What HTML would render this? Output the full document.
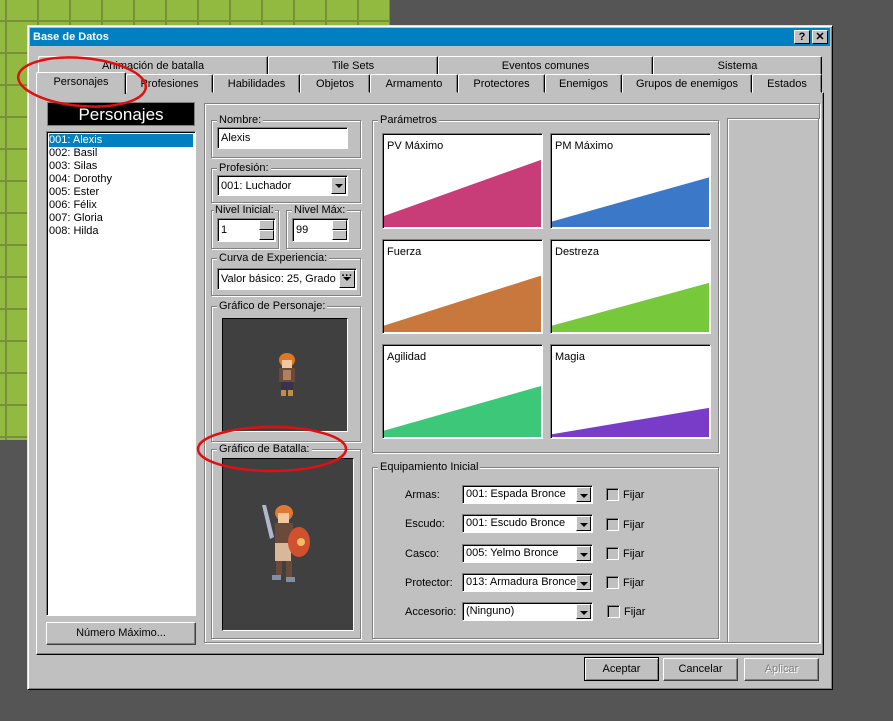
<!DOCTYPE html>
<html><head><meta charset="utf-8"><style>
*{box-sizing:border-box;margin:0;padding:0}
body{width:893px;height:721px;background:#555;position:relative;overflow:hidden;font-family:"Liberation Sans",sans-serif;font-size:11px;color:#000}
.a{position:absolute;white-space:nowrap}
.grass{background-color:#93ba40;background-image:linear-gradient(90deg,transparent 5px,#78903a 5px,#78903a 7px,transparent 7px),linear-gradient(0deg,transparent 10px,#78903a 10px,#78903a 12px,transparent 12px);background-size:32px 32px}
.win{left:27px;top:25px;width:806px;height:665px;background:#c0c0c0;border:1px solid;border-color:#dfdfdf #000 #000 #dfdfdf;box-shadow:inset 1px 1px #fff,inset -1px -1px #808080}
.title{left:30px;top:28px;width:800px;height:18px;background:#0080c0;color:#fff;font-weight:bold;font-size:11px;line-height:18px;padding-left:3px}
.tb{width:16px;height:14px;background:#c0c0c0;border:1px solid;border-color:#fff #000 #000 #fff;color:#000;font-weight:bold;text-align:center;line-height:12px;font-size:11px}
.tab{height:19px;border:1px solid;border-color:#fff #000 transparent #fff;border-radius:2px 2px 0 0;text-align:center;line-height:19px;background:#c0c0c0;box-shadow:inset -1px 0 #808080}
.raised{border:1px solid;border-color:#fff #404040 #404040 #fff;box-shadow:inset -1px -1px #808080}
.sunk{border:1px solid;border-color:#808080 #fff #fff #808080;box-shadow:inset 1px 1px #000}
.grp{border:1px solid #808080;box-shadow:inset 1px 1px #fff,1px 1px #fff}
.lg{position:absolute;top:-7px;left:5px;background:#c0c0c0;padding:0 2px;line-height:13px;white-space:nowrap}
.inp{background:#fff;line-height:18px;padding-left:3px;white-space:nowrap;overflow:hidden}
.dd{position:absolute;right:1px;top:1px;bottom:1px;width:15px;background:#c0c0c0;border:1px solid;border-color:#fff #000 #000 #fff}
.dd:after{content:"";position:absolute;left:3px;top:6px;border:4px solid transparent;border-top:4px solid #000;border-bottom:0}
.spin{position:absolute;right:1px;top:1px;width:15px;bottom:1px}
.spin div{height:50%;background:#c0c0c0;border:1px solid;border-color:#fff #000 #000 #fff}
.chart{background:#fff}
.chart span{position:absolute;left:4px;top:6px}
.btn{text-align:center;line-height:21px;background:#c0c0c0}
.cb{width:13px;height:13px;background:#c0c0c0;border:1px solid;border-color:#808080 #fff #fff #808080;box-shadow:inset 1px 1px #000}
</style></head><body>
<div class="a grass" style="left:0;top:0;width:390px;height:25px"></div>
<div class="a grass" style="left:0;top:0;width:28px;height:440px"></div>
<div class="a win"></div>
<div class="a title">Base de Datos
 <div class="a tb" style="left:764px;top:2px">?</div><div class="a tb" style="left:782px;top:2px">✕</div></div>

<div class="a tab" style="left:38px;top:56px;width:230px">Animación de batalla</div>
<div class="a tab" style="left:268px;top:56px;width:170px">Tile Sets</div>
<div class="a tab" style="left:438px;top:56px;width:215px">Eventos comunes</div>
<div class="a tab" style="left:653px;top:56px;width:169px">Sistema</div>

<div class="a raised" style="left:36px;top:92px;width:788px;height:563px;border-color:#fff #000 #000 #fff"></div>
<div class="a tab" style="left:126px;top:74px;width:87px">Profesiones</div>
<div class="a tab" style="left:213px;top:74px;width:87px">Habilidades</div>
<div class="a tab" style="left:300px;top:74px;width:70px">Objetos</div>
<div class="a tab" style="left:370px;top:74px;width:88px">Armamento</div>
<div class="a tab" style="left:458px;top:74px;width:87px">Protectores</div>
<div class="a tab" style="left:545px;top:74px;width:77px">Enemigos</div>
<div class="a tab" style="left:622px;top:74px;width:130px">Grupos de enemigos</div>
<div class="a tab" style="left:752px;top:74px;width:70px">Estados</div>
<div class="a tab" style="left:36px;top:72px;width:90px;height:22px;border-bottom:none;line-height:18px">Personajes</div>

<div class="a" style="left:47px;top:102px;width:148px;height:24px;background:#000;color:#fff;font-size:17px;text-align:center;line-height:24px;border:1px solid #808080">Personajes</div>
<div class="a sunk" style="left:46px;top:131px;width:150px;height:485px;background:#fff;padding:2px 2px;line-height:13px">
<div style="background:#0080c0;color:#fff">001: Alexis</div><div>002: Basil</div><div>003: Silas</div><div>004: Dorothy</div><div>005: Ester</div><div>006: Félix</div><div>007: Gloria</div><div>008: Hilda</div></div>
<div class="a raised btn" style="left:46px;top:622px;width:150px;height:23px">Número Máximo...</div>

<div class="a grp" style="left:204px;top:103px;width:616px;height:540px"></div>

<div class="a grp" style="left:211px;top:120px;width:150px;height:38px"><span class="lg">Nombre:</span></div>
<div class="a sunk inp" style="left:217px;top:127px;width:131px;height:22px;line-height:20px">Alexis</div>
<div class="a grp" style="left:211px;top:168px;width:150px;height:35px"><span class="lg">Profesión:</span></div>
<div class="a sunk inp" style="left:217px;top:175px;width:131px;height:21px;line-height:20px">001: Luchador<div class="dd"></div></div>
<div class="a grp" style="left:211px;top:210px;width:68px;height:39px"><span class="lg" style="left:2px;padding:0 1px">Nivel Inicial:</span></div>
<div class="a sunk inp" style="left:217px;top:218px;width:59px;height:24px;line-height:22px">1<div class="spin"><div></div><div></div></div></div>
<div class="a grp" style="left:286px;top:210px;width:75px;height:39px"><span class="lg">Nivel Máx:</span></div>
<div class="a sunk inp" style="left:292px;top:218px;width:57px;height:24px;line-height:22px">99<div class="spin"><div></div><div></div></div></div>
<div class="a grp" style="left:211px;top:258px;width:150px;height:38px"><span class="lg">Curva de Experiencia:</span></div>
<div class="a sunk inp" style="left:217px;top:268px;width:140px;height:22px;line-height:21px">Valor básico: 25, Grado<div class="dd" style="width:16px;text-align:center;line-height:10px;font-weight:bold">···</div></div>
<div class="a grp" style="left:211px;top:306px;width:150px;height:136px"><span class="lg">Gráfico de Personaje:</span></div>
<div class="a" style="left:222px;top:318px;width:126px;height:114px;background:#404040;border:1px solid;border-color:#000 #fff #fff #000"></div>
<svg class="a" style="left:275px;top:352px" width="24" height="46" viewBox="0 0 24 46">
<ellipse cx="12" cy="8" rx="8" ry="7" fill="#e07820"/><rect x="7" y="8" width="10" height="8" fill="#f0c8a0"/><rect x="4" y="16" width="16" height="14" fill="#6a4a3a"/><rect x="8" y="18" width="8" height="10" fill="#b08060"/><rect x="6" y="30" width="12" height="8" fill="#3a3050"/><rect x="6" y="38" width="5" height="6" fill="#c09040"/><rect x="13" y="38" width="5" height="6" fill="#c09040"/></svg>
<div class="a grp" style="left:211px;top:449px;width:150px;height:190px"><span class="lg">Gráfico de Batalla:</span></div>
<div class="a" style="left:222px;top:458px;width:132px;height:173px;background:#404040;border:1px solid;border-color:#000 #fff #fff #000"></div>
<svg class="a" style="left:258px;top:503px" width="60" height="85" viewBox="0 0 60 85">
<polygon points="4,2 8,2 16,34 12,36" fill="#b0b8d0"/><ellipse cx="26" cy="10" rx="9" ry="8" fill="#e07830"/><rect x="20" y="10" width="11" height="10" fill="#f0c8a0"/><rect x="17" y="20" width="18" height="22" fill="#6a4a3a"/><rect x="17" y="40" width="16" height="18" fill="#d8b898"/><rect x="18" y="58" width="6" height="14" fill="#6a4a3a"/><rect x="28" y="58" width="6" height="16" fill="#6a4a3a"/><rect x="14" y="72" width="9" height="5" fill="#8090a0"/><rect x="28" y="74" width="9" height="5" fill="#8090a0"/><ellipse cx="41" cy="39" rx="11" ry="15" fill="#d05030"/><circle cx="43" cy="39" r="4" fill="#f0c060"/></svg>

<div class="a grp" style="left:372px;top:120px;width:347px;height:333px"><span class="lg">Parámetros</span></div>
<div class="a sunk chart" style="left:382px;top:133px;width:161px;height:96px"><span>PV Máximo</span><svg class="a" style="left:1px;top:1px" width="157" height="92" viewBox="0 0 100 100" preserveAspectRatio="none"><polygon points="0,88 100,27 100,100 0,100" fill="#c83c78"/></svg></div>
<div class="a sunk chart" style="left:550px;top:133px;width:161px;height:96px"><span>PM Máximo</span><svg class="a" style="left:1px;top:1px" width="157" height="92" viewBox="0 0 100 100" preserveAspectRatio="none"><polygon points="0,94 100,46 100,100 0,100" fill="#3c78c8"/></svg></div>
<div class="a sunk chart" style="left:382px;top:239px;width:161px;height:95px"><span>Fuerza</span><svg class="a" style="left:1px;top:1px" width="157" height="91" viewBox="0 0 100 100" preserveAspectRatio="none"><polygon points="0,93 100,38 100,100 0,100" fill="#c8783c"/></svg></div>
<div class="a sunk chart" style="left:550px;top:239px;width:161px;height:95px"><span>Destreza</span><svg class="a" style="left:1px;top:1px" width="157" height="91" viewBox="0 0 100 100" preserveAspectRatio="none"><polygon points="0,93 100,46 100,100 0,100" fill="#78c83c"/></svg></div>
<div class="a sunk chart" style="left:382px;top:344px;width:161px;height:95px"><span>Agilidad</span><svg class="a" style="left:1px;top:1px" width="157" height="91" viewBox="0 0 100 100" preserveAspectRatio="none"><polygon points="0,93 100,44 100,100 0,100" fill="#3cc878"/></svg></div>
<div class="a sunk chart" style="left:550px;top:344px;width:161px;height:95px"><span>Magia</span><svg class="a" style="left:1px;top:1px" width="157" height="91" viewBox="0 0 100 100" preserveAspectRatio="none"><polygon points="0,97 100,68 100,100 0,100" fill="#783cc8"/></svg></div>

<div class="a grp" style="left:727px;top:118px;width:92px;height:525px"></div>

<div class="a grp" style="left:372px;top:467px;width:347px;height:172px"><span class="lg">Equipamiento Inicial</span></div>
<div class="a" style="left:405px;top:489px">Armas:</div>
<div class="a" style="left:405px;top:518px">Escudo:</div>
<div class="a" style="left:405px;top:548px">Casco:</div>
<div class="a" style="left:405px;top:577px">Protector:</div>
<div class="a" style="left:405px;top:606px">Accesorio:</div>
<div class="a sunk inp" style="left:462px;top:485px;width:131px;height:19px;line-height:17px">001: Espada Bronce<div class="dd"></div></div>
<div class="a sunk inp" style="left:462px;top:514px;width:131px;height:19px;line-height:17px">001: Escudo Bronce<div class="dd"></div></div>
<div class="a sunk inp" style="left:462px;top:544px;width:131px;height:19px;line-height:17px">005: Yelmo Bronce<div class="dd"></div></div>
<div class="a sunk inp" style="left:462px;top:573px;width:131px;height:19px;line-height:17px">013: Armadura Bronce<div class="dd"></div></div>
<div class="a sunk inp" style="left:462px;top:602px;width:131px;height:19px;line-height:17px">(Ninguno)<div class="dd"></div></div>
<div class="a cb" style="left:606px;top:488px"></div><div class="a" style="left:623px;top:489px">Fijar</div>
<div class="a cb" style="left:606px;top:518px"></div><div class="a" style="left:623px;top:519px">Fijar</div>
<div class="a cb" style="left:606px;top:547px"></div><div class="a" style="left:623px;top:548px">Fijar</div>
<div class="a cb" style="left:606px;top:576px"></div><div class="a" style="left:623px;top:577px">Fijar</div>
<div class="a cb" style="left:607px;top:605px"></div><div class="a" style="left:624px;top:606px">Fijar</div>

<div class="a raised btn" style="left:584px;top:657px;width:75px;height:24px;border:1px solid #000;box-shadow:inset 1px 1px #fff,inset -1px -1px #808080;line-height:22px">Aceptar</div>
<div class="a raised btn" style="left:663px;top:658px;width:75px;height:23px">Cancelar</div>
<div class="a raised btn" style="left:744px;top:658px;width:75px;height:23px;color:#808080;text-shadow:1px 1px #fff">Aplicar</div>

<svg class="a" style="left:0;top:0" width="893" height="721">
<ellipse cx="82" cy="82" rx="64" ry="24" fill="none" stroke="#e01010" stroke-width="2.5" transform="rotate(5 82 82)"/>
<ellipse cx="272" cy="449" rx="74" ry="22" fill="none" stroke="#e01010" stroke-width="2.5"/>
</svg>
</body></html>
